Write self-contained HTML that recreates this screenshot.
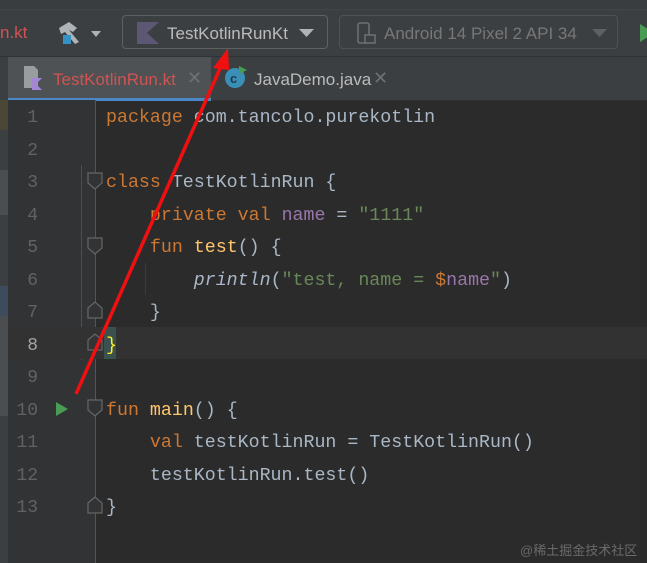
<!DOCTYPE html><html><head><style>
body{margin:0;width:647px;height:563px;background:#2b2b2b;overflow:hidden;position:relative;font-family:"Liberation Sans",sans-serif}
.a{position:absolute}
.code{font-family:"Liberation Mono",monospace;font-size:18.3px;color:#a9b7c6;white-space:pre;line-height:32.5px}
.k{color:#cc7832}.f{color:#ffc66d}.s{color:#6a8759}.p{color:#9876aa}
.ln{font-family:"Liberation Mono",monospace;font-size:18px;color:#606366;width:38px;text-align:right;line-height:32.5px}
</style></head><body>
<div class="a" style="left:0;top:0;width:647px;height:56px;background:#3c3f41;border-bottom:1px solid #323232"></div>
<div class="a" style="left:0;top:0;width:647px;height:9px;background:#3a3d3f;border-bottom:1px solid #444"></div>
<div class="a" style="left:0;top:23px;font-size:17px;color:#d25252">n.kt</div>
<svg class="a" style="left:55px;top:20px" width="50" height="30"><path d="M4 8 L14 2 L22 8 L18 12 L14 10 L24 22 L20 24 L10 12 L6 14Z" fill="#aeb3b7"/><rect x="8" y="15" width="8" height="9" fill="#3592c4"/><path d="M36 11 L46 11 L41 17Z" fill="#aeb3b7"/></svg>
<div class="a" style="left:122px;top:15px;width:204px;height:32px;border:1px solid #5e6162;border-radius:4px"></div>
<svg class="a" style="left:135px;top:20px" width="26" height="26"><path d="M2 2 H24 L12 13 L24 24 H2Z" fill="#5c5773"/></svg>
<div class="a" style="left:167px;top:24px;font-size:17px;color:#bbbbbb">TestKotlinRunKt</div>
<svg class="a" style="left:298px;top:28px" width="18" height="10"><path d="M1 1 H16 L8.5 9Z" fill="#aeb3b7"/></svg>
<div class="a" style="left:339px;top:15px;width:277px;height:32px;border:1px solid #4f5253;border-radius:4px"></div>
<svg class="a" style="left:356px;top:22px" width="22" height="26"><rect x="2" y="1" width="11" height="20" rx="2" fill="none" stroke="#6e7173" stroke-width="1.5"/><rect x="9" y="13" width="10" height="8" fill="#3c3f41" stroke="#6e7173" stroke-width="1.5"/></svg>
<div class="a" style="left:384px;top:24px;font-size:17px;color:#777">Android 14 Pixel 2 API 34</div>
<svg class="a" style="left:591px;top:28px" width="18" height="10"><path d="M1 1 H16 L8.5 9Z" fill="#5e6162"/></svg>
<svg class="a" style="left:638px;top:22px" width="10" height="22"><path d="M2 2 L16 11 L2 20Z" fill="#499c54"/></svg>
<div class="a" style="left:0;top:57px;width:647px;height:43px;background:#3c3f41;border-bottom:1px solid #323232"></div>
<div class="a" style="left:8px;top:57px;width:203px;height:41px;background:#4e5254;border-bottom:3px solid #4a88c7"></div>
<svg class="a" style="left:20px;top:64px" width="26" height="28"><path d="M4 2 H14 L18 6 V24 H4Z" fill="#9a9da0"/><path d="M12 14 H22 L16 20 L22 26 H12Z" fill="#a386d6"/></svg>
<div class="a" style="left:53px;top:70px;font-size:17px;color:#d25252">TestKotlinRun.kt</div>
<div class="a" style="left:187px;top:68px;font-size:18px;color:#6e7173">✕</div>
<svg class="a" style="left:224px;top:64px" width="26" height="26"><circle cx="11" cy="14" r="10" fill="#3a8fb7"/><text x="6" y="19" font-size="13" font-family="Liberation Sans" fill="#1d3b4a" font-weight="bold">c</text><path d="M15 2 L23 6 L15 10Z" fill="#499c54"/></svg>
<div class="a" style="left:254px;top:70px;font-size:17px;color:#bbbbbb">JavaDemo.java</div>
<div class="a" style="left:373px;top:68px;font-size:18px;color:#6e7173">✕</div>
<div class="a" style="left:0;top:100px;width:8px;height:463px;background:#3c3f41"></div>
<div class="a" style="left:0;top:100px;width:8px;height:30px;background:#4a4638"></div>
<div class="a" style="left:0;top:170px;width:8px;height:45px;background:#4b4e50"></div>
<div class="a" style="left:0;top:286px;width:8px;height:30px;background:#3d4b5a"></div>
<div class="a" style="left:0;top:316px;width:8px;height:100px;background:#4b4e50"></div>
<div class="a" style="left:8px;top:100px;width:87px;height:463px;background:#313335"></div>
<div class="a" style="left:95px;top:100px;width:1px;height:463px;background:#555"></div>
<div class="a" style="left:81px;top:165px;width:1px;height:195px;background:#4a5050"></div>
<div class="a" style="left:8px;top:327px;width:639px;height:32px;background:#323232"></div>
<div class="a" style="left:145px;top:263px;width:1px;height:32px;background:#3b3b3b"></div>
<div class="a ln" style="left:0;top:102px">1<br>2<br>3<br>4<br>5<br>6<br>7<br><span style="color:#a4a3a3">8</span><br>9<br>10<br>11<br>12<br>13</div>
<svg class="a" style="left:85px;top:100px" width="22" height="420">
<g fill="#313335" stroke="#666" stroke-width="1.2">
<path d="M3 73 H17 V83 L10 89 L3 83Z"/><path d="M3 138 H17 V148 L10 154 L3 148Z"/>
<path d="M3 208 L10 202 L17 208 V218 H3Z"/><path d="M3 240 L10 234 L17 240 V250 H3Z"/>
<path d="M3 300 H17 V310 L10 316 L3 310Z"/><path d="M3 403 L10 397 L17 403 V413 H3Z"/></g></svg>
<svg class="a" style="left:55px;top:401px" width="14" height="16"><path d="M1 1 L13 8 L1 15Z" fill="#499c54"/></svg>
<div class="a" style="left:104px;top:327px;width:12px;height:32px;background:#3b514d"></div>
<div class="a code" style="left:106px;top:102px"><span class="k">package</span> com.tancolo.purekotlin

<span class="k">class</span> TestKotlinRun {
    <span class="k">private val</span> <span class="p">name</span> = <span class="s">"1111"</span>
    <span class="k">fun</span> <span class="f">test</span>() {
        <i>println</i>(<span class="s">"test, name = </span><span class="k">$</span><span class="p">name</span><span class="s">"</span>)
    }
<span style="color:#ffef28">}</span>

<span class="k">fun</span> <span class="f">main</span>() {
    <span class="k">val</span> testKotlinRun = TestKotlinRun()
    testKotlinRun.test()
}</div>
<div class="a" style="left:520px;top:540px;font-size:13px;color:#6a6a6a;font-family:'Liberation Sans','Noto Sans CJK SC',sans-serif">@稀土掘金技术社区</div>
<svg class="a" style="left:0;top:0" width="647" height="563"><line x1="76" y1="394" x2="222" y2="64" stroke="#f01010" stroke-width="3.5"/><path d="M228 48 L213 68 L229 70Z" fill="#f01010"/></svg>
</body></html>
